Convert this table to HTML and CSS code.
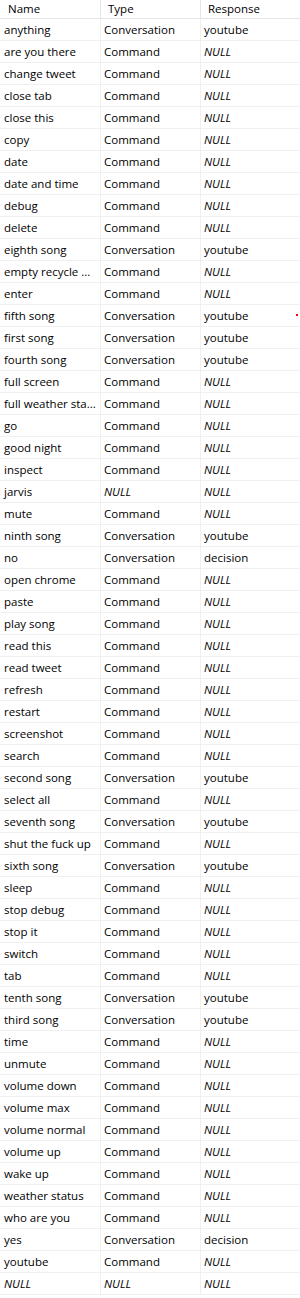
FILE: index.html
```html
<!DOCTYPE html>
<html>
<head>
<meta charset="utf-8">
<link rel="stylesheet" href="styles.css">
</head>
<body>
<div class="grid">
  <div class="row head"><div class="c c1">Name</div><div class="c c2">Type</div><div class="c c3">Response</div></div>
  <div class="row"><div class="c c1">anything</div><div class="c c2">Conversation</div><div class="c c3">youtube</div></div>
  <div class="row"><div class="c c1">are you there</div><div class="c c2">Command</div><div class="c c3 n">NULL</div></div>
  <div class="row"><div class="c c1">change tweet</div><div class="c c2">Command</div><div class="c c3 n">NULL</div></div>
  <div class="row"><div class="c c1">close tab</div><div class="c c2">Command</div><div class="c c3 n">NULL</div></div>
  <div class="row"><div class="c c1">close this</div><div class="c c2">Command</div><div class="c c3 n">NULL</div></div>
  <div class="row"><div class="c c1">copy</div><div class="c c2">Command</div><div class="c c3 n">NULL</div></div>
  <div class="row"><div class="c c1">date</div><div class="c c2">Command</div><div class="c c3 n">NULL</div></div>
  <div class="row"><div class="c c1">date and time</div><div class="c c2">Command</div><div class="c c3 n">NULL</div></div>
  <div class="row"><div class="c c1">debug</div><div class="c c2">Command</div><div class="c c3 n">NULL</div></div>
  <div class="row"><div class="c c1">delete</div><div class="c c2">Command</div><div class="c c3 n">NULL</div></div>
  <div class="row"><div class="c c1">eighth song</div><div class="c c2">Conversation</div><div class="c c3">youtube</div></div>
  <div class="row"><div class="c c1">empty recycle ...</div><div class="c c2">Command</div><div class="c c3 n">NULL</div></div>
  <div class="row"><div class="c c1">enter</div><div class="c c2">Command</div><div class="c c3 n">NULL</div></div>
  <div class="row"><div class="c c1">fifth song</div><div class="c c2">Conversation</div><div class="c c3">youtube<span class="dot"></span></div></div>
  <div class="row"><div class="c c1">first song</div><div class="c c2">Conversation</div><div class="c c3">youtube</div></div>
  <div class="row"><div class="c c1">fourth song</div><div class="c c2">Conversation</div><div class="c c3">youtube</div></div>
  <div class="row"><div class="c c1">full screen</div><div class="c c2">Command</div><div class="c c3 n">NULL</div></div>
  <div class="row"><div class="c c1">full weather sta...</div><div class="c c2">Command</div><div class="c c3 n">NULL</div></div>
  <div class="row"><div class="c c1">go</div><div class="c c2">Command</div><div class="c c3 n">NULL</div></div>
  <div class="row"><div class="c c1">good night</div><div class="c c2">Command</div><div class="c c3 n">NULL</div></div>
  <div class="row"><div class="c c1">inspect</div><div class="c c2">Command</div><div class="c c3 n">NULL</div></div>
  <div class="row"><div class="c c1">jarvis</div><div class="c c2 n">NULL</div><div class="c c3 n">NULL</div></div>
  <div class="row"><div class="c c1">mute</div><div class="c c2">Command</div><div class="c c3 n">NULL</div></div>
  <div class="row"><div class="c c1">ninth song</div><div class="c c2">Conversation</div><div class="c c3">youtube</div></div>
  <div class="row"><div class="c c1">no</div><div class="c c2">Conversation</div><div class="c c3">decision</div></div>
  <div class="row"><div class="c c1">open chrome</div><div class="c c2">Command</div><div class="c c3 n">NULL</div></div>
  <div class="row"><div class="c c1">paste</div><div class="c c2">Command</div><div class="c c3 n">NULL</div></div>
  <div class="row"><div class="c c1">play song</div><div class="c c2">Command</div><div class="c c3 n">NULL</div></div>
  <div class="row"><div class="c c1">read this</div><div class="c c2">Command</div><div class="c c3 n">NULL</div></div>
  <div class="row"><div class="c c1">read tweet</div><div class="c c2">Command</div><div class="c c3 n">NULL</div></div>
  <div class="row"><div class="c c1">refresh</div><div class="c c2">Command</div><div class="c c3 n">NULL</div></div>
  <div class="row"><div class="c c1">restart</div><div class="c c2">Command</div><div class="c c3 n">NULL</div></div>
  <div class="row"><div class="c c1">screenshot</div><div class="c c2">Command</div><div class="c c3 n">NULL</div></div>
  <div class="row"><div class="c c1">search</div><div class="c c2">Command</div><div class="c c3 n">NULL</div></div>
  <div class="row"><div class="c c1">second song</div><div class="c c2">Conversation</div><div class="c c3">youtube</div></div>
  <div class="row"><div class="c c1">select all</div><div class="c c2">Command</div><div class="c c3 n">NULL</div></div>
  <div class="row"><div class="c c1">seventh song</div><div class="c c2">Conversation</div><div class="c c3">youtube</div></div>
  <div class="row"><div class="c c1">shut the fuck up</div><div class="c c2">Command</div><div class="c c3 n">NULL</div></div>
  <div class="row"><div class="c c1">sixth song</div><div class="c c2">Conversation</div><div class="c c3">youtube</div></div>
  <div class="row"><div class="c c1">sleep</div><div class="c c2">Command</div><div class="c c3 n">NULL</div></div>
  <div class="row"><div class="c c1">stop debug</div><div class="c c2">Command</div><div class="c c3 n">NULL</div></div>
  <div class="row"><div class="c c1">stop it</div><div class="c c2">Command</div><div class="c c3 n">NULL</div></div>
  <div class="row"><div class="c c1">switch</div><div class="c c2">Command</div><div class="c c3 n">NULL</div></div>
  <div class="row"><div class="c c1">tab</div><div class="c c2">Command</div><div class="c c3 n">NULL</div></div>
  <div class="row"><div class="c c1">tenth song</div><div class="c c2">Conversation</div><div class="c c3">youtube</div></div>
  <div class="row"><div class="c c1">third song</div><div class="c c2">Conversation</div><div class="c c3">youtube</div></div>
  <div class="row"><div class="c c1">time</div><div class="c c2">Command</div><div class="c c3 n">NULL</div></div>
  <div class="row"><div class="c c1">unmute</div><div class="c c2">Command</div><div class="c c3 n">NULL</div></div>
  <div class="row"><div class="c c1">volume down</div><div class="c c2">Command</div><div class="c c3 n">NULL</div></div>
  <div class="row"><div class="c c1">volume max</div><div class="c c2">Command</div><div class="c c3 n">NULL</div></div>
  <div class="row"><div class="c c1">volume normal</div><div class="c c2">Command</div><div class="c c3 n">NULL</div></div>
  <div class="row"><div class="c c1">volume up</div><div class="c c2">Command</div><div class="c c3 n">NULL</div></div>
  <div class="row"><div class="c c1">wake up</div><div class="c c2">Command</div><div class="c c3 n">NULL</div></div>
  <div class="row"><div class="c c1">weather status</div><div class="c c2">Command</div><div class="c c3 n">NULL</div></div>
  <div class="row"><div class="c c1">who are you</div><div class="c c2">Command</div><div class="c c3 n">NULL</div></div>
  <div class="row"><div class="c c1">yes</div><div class="c c2">Conversation</div><div class="c c3">decision</div></div>
  <div class="row"><div class="c c1">youtube</div><div class="c c2">Command</div><div class="c c3 n">NULL</div></div>
  <div class="row"><div class="c c1 n">NULL</div><div class="c c2 n">NULL</div><div class="c c3 n">NULL</div></div>
</div>
</body>
</html>
```
FILE: styles.css
```css
html, body {
  margin: 0;
  padding: 0;
  background: #ffffff;
}
body {
  font-family: "Open Sans", "Noto Sans", "Liberation Sans", sans-serif;
  font-size: 11.5px;
  color: #000000;
  width: 300px;
  height: 1298px;
  overflow: hidden;
}
*, *::before, *::after {
  box-sizing: border-box;
}
.grid {
  display: flex;
  flex-direction: column;
}
.row {
  display: grid;
  grid-template-columns: 101px 100px 99px;
  height: 22px;
  flex: none;
  border-bottom: 1px solid #f0f0f0;
}
.row.head {
  height: 19px;
  border-bottom: 1px solid #e5e5e5;
}
.c {
  display: flex;
  align-items: center;
  padding-left: 3px;
  padding-top: 1px;
  border-right: 1px solid #f0f0f0;
  white-space: nowrap;
  overflow: hidden;
  line-height: 1;
  position: relative;
}
.c1 { padding-left: 4px; }
.c3 { border-right: none; overflow: visible; }
.head .c {
  border-right-color: #e5e5e5;
  padding-left: 8px;
  padding-top: 0;
}
.head .c2, .head .c3 { padding-left: 7px; }
.n { font-style: italic; }
.dot {
  position: absolute;
  left: 95px;
  top: 9px;
  width: 2px;
  height: 2px;
  background: #ff0000;
}
```
